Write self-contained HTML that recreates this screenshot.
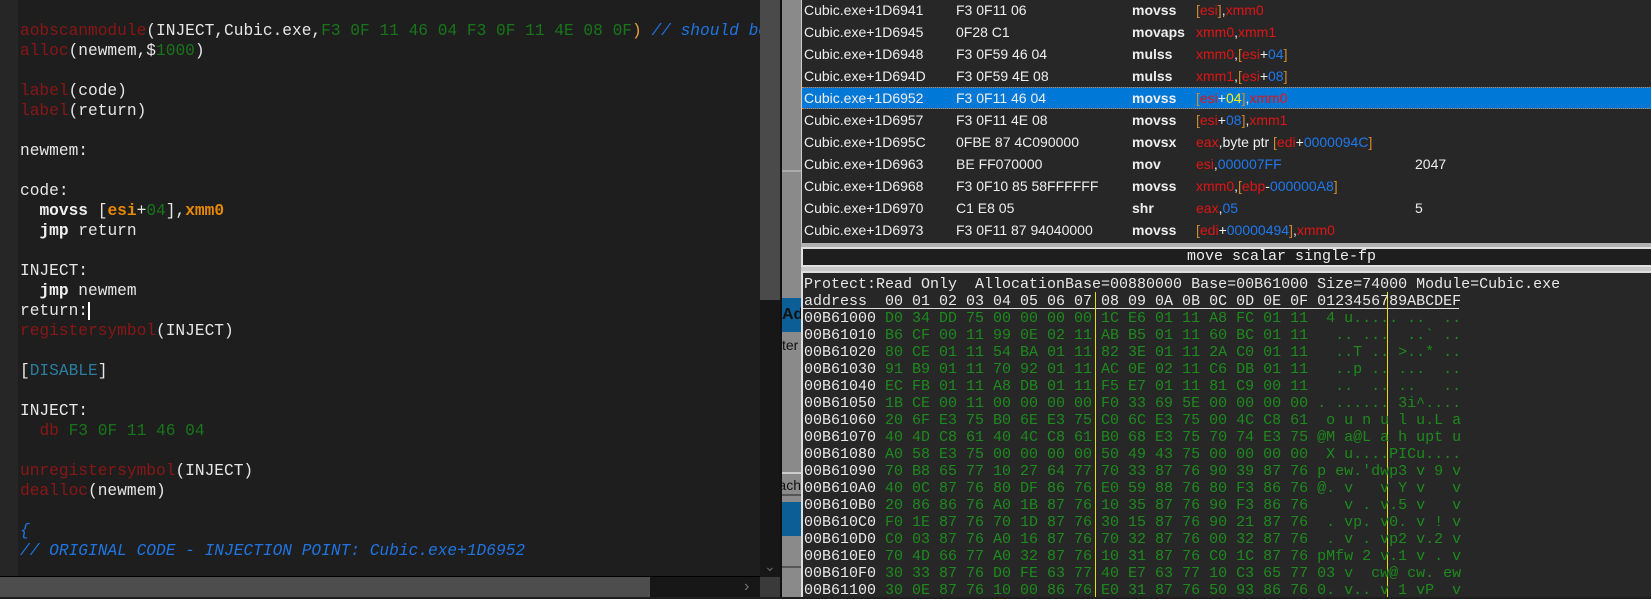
<!DOCTYPE html>
<html><head><meta charset="utf-8"><style>
*{margin:0;padding:0;box-sizing:border-box}
body{width:1651px;height:597px;background:#1e1e1e;position:relative;overflow:hidden}
.a{position:absolute}
#ed{left:0;top:0;width:760px;height:577px;background:#1e1e1e}
#gut{left:0;top:0;width:18px;height:577px;background:#262626}
#code{left:20px;top:21px;font:16.2px/20px "Liberation Mono",monospace;color:#e6e6e6;white-space:pre}
.k{color:#8a1616}.g{color:#18761a}.c{color:#1f74e0;font-style:italic}.b{font-weight:bold;color:#f0f0f0}.o{color:#e88a00;font-weight:bold}.t{color:#2a7ea0}
#dis{left:801px;top:0;width:850px;height:243px;background:#272727;border-left:1px solid #ccc}
.r{position:absolute;left:0;width:850px;height:22px;font:14px/22px "Liberation Sans",sans-serif;color:#eee;white-space:pre}
.r span{position:absolute;top:0}
.r .m{font-weight:bold}
.hl{background:#0078d7;border-top:1px dotted #e08030;border-bottom:1px dotted #e08030;line-height:20px}
.rd{color:#e01414}.bl{color:#1f78ee}.br{color:#d08a30}.y{color:#f4f020}
#hex{left:801px;top:271px;width:850px;height:326px;background:#272727;border-left:2px solid #ddd;border-top:2px solid #ddd}
#hx{left:804px;top:276px;font:15px/17px "Liberation Mono",monospace;color:#e8e8e8;white-space:pre}
.hg{color:#1d8a1d}
</style></head><body>
<div id="ed" class="a"></div><div id="gut" class="a"></div>
<div id="code" class="a"><span class="k">aobscanmodule</span>(INJECT,Cubic.exe,<span class="g">F3 0F 11 46 04 F3 0F 11 4E 08 0F</span><span style="color:#e8a040">)</span> <span class="c">// should be unique</span>
<span class="k">alloc</span>(newmem,$<span class="g">1000</span>)

<span class="k">label</span>(code)
<span class="k">label</span>(return)

newmem:

code:
  <span class="b">movss</span> [<span class="o">esi</span>+<span class="g">04</span>],<span class="o">xmm0</span>
  <span class="b">jmp</span> return

INJECT:
  <span class="b">jmp</span> newmem
return:<span style="border-left:2px solid #fff"></span>
<span class="k">registersymbol</span>(INJECT)

[<span class="t">DISABLE</span>]

INJECT:
  <span class="k">db</span> <span class="g">F3 0F 11 46 04</span>

<span class="k">unregistersymbol</span>(INJECT)
<span class="k">dealloc</span>(newmem)

<span class="c">{</span>
<span class="c">// ORIGINAL CODE - INJECTION POINT: Cubic.exe+1D6952</span></div>
<div class="a" style="left:760px;top:0;width:20px;height:577px;background:#171717"></div>
<div class="a" style="left:760px;top:0;width:20px;height:300px;background:#4a4a4a"></div>
<div class="a" style="left:764px;top:558px;color:#666;font:14px sans-serif">&#8964;</div>
<div class="a" style="left:0;top:576px;width:760px;height:1px;background:#000"></div>
<div class="a" style="left:0;top:577px;width:760px;height:20px;background:#171717"></div>
<div class="a" style="left:0;top:577px;width:650px;height:20px;background:#4d4d4d"></div>
<div class="a" style="left:744px;top:578px;color:#777;font:16px sans-serif">&#8250;</div>
<div class="a" style="left:760px;top:577px;width:20px;height:20px;background:#3a3a3a"></div>
<div class="a" style="left:780px;top:0;width:2px;height:597px;background:#111"></div>
<div class="a" style="left:782px;top:0;width:19px;height:597px;background:#8a8a8a"></div>
<div class="a" style="left:782px;top:170px;width:19px;height:2px;background:#aaa"></div>
<div class="a" style="left:782px;top:298px;width:19px;height:34px;background:#0b5f96;color:#111;font:bold 16px/34px 'Liberation Sans',sans-serif;overflow:hidden">Ad</div>
<div class="a" style="left:782px;top:336px;width:19px;font:14px/18px 'Liberation Sans',sans-serif;color:#111;overflow:hidden">ter</div>
<div class="a" style="left:782px;top:472px;width:19px;height:2px;background:#ccc"></div>
<div class="a" style="left:782px;top:476px;width:19px;font:14px/18px 'Liberation Sans',sans-serif;color:#111;overflow:hidden;direction:rtl">ach</div>
<div class="a" style="left:782px;top:494px;width:19px;height:2px;background:#555"></div>
<div class="a" style="left:782px;top:502px;width:19px;height:34px;background:#0b5f96"></div>
<div class="a" style="left:782px;top:566px;width:19px;height:2px;background:#555"></div>
<div id="dis" class="a">
<div class="r" style="top:-1px"><span style="left:2px">Cubic.exe+1D6941</span><span style="left:154px">F3 0F11 06</span><span class="m" style="left:330px">movss</span><span style="left:394px"><span class="br" style="position:static">[</span><span class="rd" style="position:static">esi</span><span class="br" style="position:static">]</span>,<span class="rd" style="position:static">xmm0</span></span></div>
<div class="r" style="top:21px"><span style="left:2px">Cubic.exe+1D6945</span><span style="left:154px">0F28 C1</span><span class="m" style="left:330px">movaps</span><span style="left:394px"><span class="rd" style="position:static">xmm0</span>,<span class="rd" style="position:static">xmm1</span></span></div>
<div class="r" style="top:43px"><span style="left:2px">Cubic.exe+1D6948</span><span style="left:154px">F3 0F59 46 04</span><span class="m" style="left:330px">mulss</span><span style="left:394px"><span class="rd" style="position:static">xmm0</span>,<span class="br" style="position:static">[</span><span class="rd" style="position:static">esi</span>+<span class="bl" style="position:static">04</span><span class="br" style="position:static">]</span></span></div>
<div class="r" style="top:65px"><span style="left:2px">Cubic.exe+1D694D</span><span style="left:154px">F3 0F59 4E 08</span><span class="m" style="left:330px">mulss</span><span style="left:394px"><span class="rd" style="position:static">xmm1</span>,<span class="br" style="position:static">[</span><span class="rd" style="position:static">esi</span>+<span class="bl" style="position:static">08</span><span class="br" style="position:static">]</span></span></div>
<div class="r hl" style="top:87px"><span style="left:2px">Cubic.exe+1D6952</span><span style="left:154px">F3 0F11 46 04</span><span class="m" style="left:330px">movss</span><span style="left:394px"><span class="br" style="position:static">[</span><span class="rd" style="position:static">esi</span>+<span class="y" style="position:static">04</span><span class="br" style="position:static">]</span>,<span class="rd" style="position:static">xmm0</span></span></div>
<div class="r" style="top:109px"><span style="left:2px">Cubic.exe+1D6957</span><span style="left:154px">F3 0F11 4E 08</span><span class="m" style="left:330px">movss</span><span style="left:394px"><span class="br" style="position:static">[</span><span class="rd" style="position:static">esi</span>+<span class="bl" style="position:static">08</span><span class="br" style="position:static">]</span>,<span class="rd" style="position:static">xmm1</span></span></div>
<div class="r" style="top:131px"><span style="left:2px">Cubic.exe+1D695C</span><span style="left:154px">0FBE 87 4C090000</span><span class="m" style="left:330px">movsx</span><span style="left:394px"><span class="rd" style="position:static">eax</span>,byte ptr <span class="br" style="position:static">[</span><span class="rd" style="position:static">edi</span>+<span class="bl" style="position:static">0000094C</span><span class="br" style="position:static">]</span></span></div>
<div class="r" style="top:153px"><span style="left:2px">Cubic.exe+1D6963</span><span style="left:154px">BE FF070000</span><span class="m" style="left:330px">mov</span><span style="left:394px"><span class="rd" style="position:static">esi</span>,<span class="bl" style="position:static">000007FF</span></span><span style="left:613px">2047</span></div>
<div class="r" style="top:175px"><span style="left:2px">Cubic.exe+1D6968</span><span style="left:154px">F3 0F10 85 58FFFFFF</span><span class="m" style="left:330px">movss</span><span style="left:394px"><span class="rd" style="position:static">xmm0</span>,<span class="br" style="position:static">[</span><span class="rd" style="position:static">ebp</span>-<span class="bl" style="position:static">000000A8</span><span class="br" style="position:static">]</span></span></div>
<div class="r" style="top:197px"><span style="left:2px">Cubic.exe+1D6970</span><span style="left:154px">C1 E8 05</span><span class="m" style="left:330px">shr</span><span style="left:394px"><span class="rd" style="position:static">eax</span>,<span class="bl" style="position:static">05</span></span><span style="left:613px">5</span></div>
<div class="r" style="top:219px"><span style="left:2px">Cubic.exe+1D6973</span><span style="left:154px">F3 0F11 87 94040000</span><span class="m" style="left:330px">movss</span><span style="left:394px"><span class="br" style="position:static">[</span><span class="rd" style="position:static">edi</span>+<span class="bl" style="position:static">00000494</span><span class="br" style="position:static">]</span>,<span class="rd" style="position:static">xmm0</span></span></div>
</div>
<div class="a" style="left:801px;top:243px;width:850px;height:4px;background:#b0b0b0"></div>
<div class="a" style="left:801px;top:247px;width:850px;height:20px;background:#1e1e1e;border:2px solid #e0e0e0;border-right:none"></div>
<div class="a" style="left:1187px;top:248px;font:15px/18px 'Liberation Mono',monospace;color:#eee;white-space:pre">move scalar single-fp</div>
<div class="a" style="left:801px;top:267px;width:850px;height:4px;background:#c8c8c8"></div>
<div id="hex" class="a"></div>
<div class="a" style="left:802px;top:308px;width:657px;height:1px;background:#ddd"></div>
<div class="a" style="left:1095px;top:292px;width:1px;height:305px;background:#e8e000"></div>
<div class="a" style="left:1387px;top:292px;width:1px;height:305px;background:#e8e000"></div>
<div id="hx" class="a">Protect:Read Only  AllocationBase=00880000 Base=00B61000 Size=74000 Module=Cubic.exe
address  00 01 02 03 04 05 06 07 08 09 0A 0B 0C 0D 0E 0F 0123456789ABCDEF
00B61000 <span class="hg">D0 34 DD 75 00 00 00 00 1C E6 01 11 A8 FC 01 11  4 u..... ..  ..</span>
00B61010 <span class="hg">B6 CF 00 11 99 0E 02 11 AB B5 01 11 60 BC 01 11   .. ...  ..` ..</span>
00B61020 <span class="hg">80 CE 01 11 54 BA 01 11 82 3E 01 11 2A C0 01 11   ..T .. >..* ..</span>
00B61030 <span class="hg">91 B9 01 11 70 92 01 11 AC 0E 02 11 C6 DB 01 11   ..p .. ...  ..</span>
00B61040 <span class="hg">EC FB 01 11 A8 DB 01 11 F5 E7 01 11 81 C9 00 11   ..  .. ..   ..</span>
00B61050 <span class="hg">1B CE 00 11 00 00 00 00 F0 33 69 5E 00 00 00 00 . ...... 3i^....</span>
00B61060 <span class="hg">20 6F E3 75 B0 6E E3 75 C0 6C E3 75 00 4C C8 61  o u n u l u.L a</span>
00B61070 <span class="hg">40 4D C8 61 40 4C C8 61 B0 68 E3 75 70 74 E3 75 @M a@L a h upt u</span>
00B61080 <span class="hg">A0 58 E3 75 00 00 00 00 50 49 43 75 00 00 00 00  X u....PICu....</span>
00B61090 <span class="hg">70 B8 65 77 10 27 64 77 70 33 87 76 90 39 87 76 p ew.'dwp3 v 9 v</span>
00B610A0 <span class="hg">40 0C 87 76 80 DF 86 76 E0 59 88 76 80 F3 86 76 @. v   v Y v   v</span>
00B610B0 <span class="hg">20 86 86 76 A0 1B 87 76 10 35 87 76 90 F3 86 76    v . v.5 v   v</span>
00B610C0 <span class="hg">F0 1E 87 76 70 1D 87 76 30 15 87 76 90 21 87 76  . vp. v0. v ! v</span>
00B610D0 <span class="hg">C0 03 87 76 A0 16 87 76 70 32 87 76 00 32 87 76  . v . vp2 v.2 v</span>
00B610E0 <span class="hg">70 4D 66 77 A0 32 87 76 10 31 87 76 C0 1C 87 76 pMfw 2 v.1 v . v</span>
00B610F0 <span class="hg">30 33 87 76 D0 FE 63 77 40 E7 63 77 10 C3 65 77 03 v  cw@ cw. ew</span>
00B61100 <span class="hg">30 0E 87 76 10 00 86 76 E0 31 87 76 50 93 86 76 0. v.. v 1 vP  v</span></div>
</body></html>
